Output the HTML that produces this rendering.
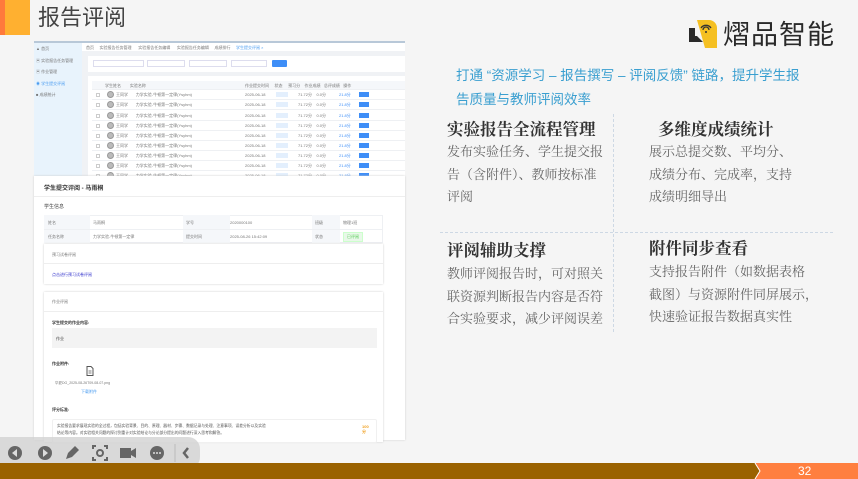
<!DOCTYPE html>
<html><head><meta charset="utf-8"><style>
*{margin:0;padding:0;box-sizing:border-box}
body{width:858px;height:479px;overflow:hidden;background:#f5f5f5;position:relative;font-family:"Liberation Sans","Noto Sans CJK SC",sans-serif}
.a{position:absolute;white-space:nowrap}
.t{font-size:4px;color:#777}
.sf{font-family:"Liberation Serif","Noto Serif CJK SC",serif}
.row{position:absolute;left:92px;width:313px;height:10px;border-bottom:1px solid #eef0f3}
.lbl{background:#f5f7fa}
h3{font-weight:bold}
</style></head><body>
<div class="a" style="left:0;top:0;width:5px;height:35px;background:#ff7a3c"></div>
<div class="a" style="left:5px;top:0;width:25px;height:35px;background:#ffb030"></div>
<div class="a" style="left:38px;top:4px;font-size:22px;color:#444;line-height:28px">报告评阅</div>

<div class="a" style="left:34px;top:41px;width:371px;height:135px;background:#f0f2f5;border-top:2px solid #b8c8d8"></div>
<div class="a" style="left:34px;top:43px;width:48px;height:135px;background:#e8f3fc"></div>
<div class="a t" style="left:36px;top:46px">▲ 首页</div>
<div class="a t" style="left:36px;top:58px">▣ 实验报告任务管理</div>
<div class="a t" style="left:36px;top:69px">▣ 作业管理</div>
<div class="a t" style="left:36px;top:81px;color:#4a9cf0">◉ 学生提交评阅</div>
<div class="a t" style="left:36px;top:92px">■ 成绩统计</div>
<div class="a" style="left:82px;top:43px;width:323px;height:8px;background:#fff"></div>
<div class="a t" style="left:86px;top:45px">首页 &nbsp;&nbsp;&nbsp; 实验报告任务管理 &nbsp;&nbsp;&nbsp;&nbsp; 实验报告任务编辑 &nbsp;&nbsp;&nbsp;&nbsp; 实验报告任务编辑 &nbsp;&nbsp;&nbsp; 成绩排行 &nbsp;&nbsp;&nbsp; <span style="color:#4a9cf0">学生提交评阅 ×</span></div>
<div class="a" style="left:88px;top:56px;width:317px;height:16px;background:#fff"></div>
<div class="a" style="left:93px;top:60px;width:51px;height:7px;border:1px solid #dde"></div>
<div class="a" style="left:147px;top:60px;width:38px;height:7px;border:1px solid #dde"></div>
<div class="a" style="left:189px;top:60px;width:38px;height:7px;border:1px solid #dde"></div>
<div class="a" style="left:231px;top:60px;width:36px;height:7px;border:1px solid #dde"></div>
<div class="a" style="left:272px;top:60px;width:15px;height:7px;background:#3e8ef7;border-radius:1px"></div>
<div class="a" style="left:88px;top:76px;width:317px;height:100px;background:#fff"></div>
<div class="row" style="top:81px;background:#f5f7fa;height:9px"></div>
<div class="a t" style="left:105px;top:83px">学生姓名 &nbsp;&nbsp;&nbsp;&nbsp;&nbsp;&nbsp; 实验名称</div>
<div class="a t" style="left:245px;top:83px">作业提交时间 &nbsp;&nbsp;&nbsp; 状态 &nbsp;&nbsp;&nbsp; 预习分 &nbsp;&nbsp; 作业成绩 &nbsp; 总评成绩 &nbsp; 操作</div>
<div id="rows"></div>
<script>
var ys=[90,100,111,121,131,141,151,161,171],h='';
ys.forEach(function(y){
h+='<div class="row" style="top:'+y+'px"></div>';
h+='<div class="a" style="left:96px;top:'+(y+3)+'px;width:4px;height:4px;border:1px solid #ccc"></div>';
h+='<div class="a" style="left:107px;top:'+(y+1)+'px;width:7px;height:7px;border-radius:50%;background:#bbb;border:1px solid #999"></div>';
h+='<div class="a t" style="left:116px;top:'+(y+2)+'px">王同学 &nbsp;&nbsp;&nbsp;&nbsp;&nbsp; 力学实验-牛顿第一定律(Ysyhm)</div>';
h+='<div class="a t" style="left:245px;top:'+(y+2)+'px">2025-06-18</div>';
h+='<div class="a" style="left:276px;top:'+(y+2)+'px;width:12px;height:5px;background:#e3effd"></div>';
h+='<div class="a t" style="left:298px;top:'+(y+2)+'px">71.72分 &nbsp;&nbsp; 0.0分</div>';
h+='<div class="a t" style="left:339px;top:'+(y+2)+'px;color:#3e8ef7">21.8分</div>';
h+='<div class="a" style="left:359px;top:'+(y+2)+'px;width:10px;height:5px;background:#3e8ef7"></div>';
});
document.getElementById('rows').innerHTML=h;
</script>

<div class="a" style="left:34px;top:176px;width:371px;height:264px;background:#fff;box-shadow:0 0 2px #ccc"></div>
<div class="a" style="left:44px;top:183px;font-size:6px;font-weight:bold;color:#333">学生提交评阅 - 马雨桐</div>
<div class="a" style="left:34px;top:196px;width:371px;height:1px;background:#eee"></div>
<div class="a" style="left:44px;top:203px;font-size:5px;color:#444">学生信息</div>
<div class="a" style="left:44px;top:215px;width:339px;height:28px;border:1px solid #eef0f3"></div>
<div class="a lbl" style="left:44px;top:215px;width:46px;height:28px"></div>
<div class="a lbl" style="left:183px;top:215px;width:47px;height:28px"></div>
<div class="a lbl" style="left:312px;top:215px;width:28px;height:28px"></div>
<div class="a" style="left:44px;top:229px;width:339px;height:1px;background:#eef0f3"></div>
<div class="a t" style="left:48px;top:220px">姓名</div><div class="a t" style="left:93px;top:220px">马雨桐</div>
<div class="a t" style="left:186px;top:220px">学号</div><div class="a t" style="left:230px;top:220px">2020000100</div>
<div class="a t" style="left:315px;top:220px">班级</div><div class="a t" style="left:343px;top:220px">物理1班</div>
<div class="a t" style="left:48px;top:234px">任务名称</div><div class="a t" style="left:93px;top:234px">力学实验-牛顿第一定律</div>
<div class="a t" style="left:186px;top:234px">提交时间</div><div class="a t" style="left:230px;top:234px">2025-08-26 15:42:09</div>
<div class="a t" style="left:315px;top:234px">状态</div>
<div class="a t" style="left:343px;top:232px;background:#e8f8e8;color:#5c5;padding:1px 3px;border:1px solid #cfc">已评阅</div>
<div class="a" style="left:44px;top:244px;width:339px;height:40px;background:#fff;box-shadow:0 0 2px #ccc"></div>
<div class="a t" style="left:52px;top:252px">预习试卷评阅</div>
<div class="a" style="left:44px;top:263px;width:339px;height:1px;background:#eee"></div>
<div class="a t" style="left:52px;top:272px;color:#33c">点击进行预习试卷评阅</div>
<div class="a" style="left:44px;top:292px;width:339px;height:150px;background:#fff;box-shadow:0 0 2px #ccc"></div>
<div class="a t" style="left:52px;top:299px">作业评阅</div>
<div class="a" style="left:44px;top:311px;width:339px;height:1px;background:#eee"></div>
<div class="a t" style="left:52px;top:320px;color:#333;font-weight:bold">学生提交的作业内容:</div>
<div class="a" style="left:52px;top:328px;width:325px;height:20px;background:#f3f3f3"></div>
<div class="a t" style="left:56px;top:336px;color:#444">作业</div>
<div class="a t" style="left:52px;top:361px;color:#333;font-weight:bold">作业附件:</div>
<svg class="a" style="left:86px;top:366px" width="8" height="10" viewBox="0 0 8 10"><path d="M1 .5h4l2 2v7H1z" fill="none" stroke="#555"/><path d="M2.5 5h3M2.5 7h3" stroke="#555" stroke-width=".8"/></svg>
<div class="a t" style="left:55px;top:381px;font-size:3.5px">华夏DG_2025-08-26T09-08-07.png</div>
<div class="a t" style="left:81px;top:389px;color:#4a9cf0">下载附件</div>
<div class="a t" style="left:52px;top:407px;color:#333;font-weight:bold">评分标准:</div>
<div class="a" style="left:52px;top:419px;width:325px;height:24px;border:1px solid #f0f0f0;border-radius:2px"></div>
<div class="a t" style="left:57px;top:424px;color:#555;font-size:3.8px">实验报告要求展现实验的全过程，包括实验背景、目的、原理、器材、步骤、数据记录与处理、注意事项、误差分析以及实验</div>
<div class="a t" style="left:57px;top:431px;color:#555;font-size:3.8px">结论等内容。对实验相关问题的探讨到重计对实验结论与分论部分提出的问题进行深入思考和解答。</div>
<div class="a t" style="left:362px;top:424px;color:#f0a020;font-weight:bold">100<br>分</div>

<div class="a" style="left:0;top:437px;width:200px;height:32px;background:rgba(210,210,210,.8);border-radius:0 12px 12px 0"></div>
<svg class="a" style="left:0;top:437px" width="200" height="32" viewBox="0 0 200 32">
<circle cx="15" cy="16" r="7" fill="#666"/><path d="M17 12l-5 4 5 4z" fill="#ddd"/>
<circle cx="45" cy="16" r="7" fill="#666"/><path d="M43 12l5 4-5 4z" fill="#ddd"/>
<path d="M66 22l2-6 7-7 4 4-7 7z" fill="#666"/>
<path d="M93 12v-3h3M104 9h3v3M107 20v3h-3M96 23h-3v-3" stroke="#666" stroke-width="2" fill="none"/><circle cx="100" cy="16" r="3" fill="none" stroke="#666" stroke-width="2"/>
<rect x="120" y="11" width="11" height="10" fill="#666"/><path d="M131 14l5-3v10l-5-3z" fill="#666"/>
<circle cx="157" cy="16" r="7" fill="#666"/><circle cx="154" cy="16" r="1" fill="#ddd"/><circle cx="157" cy="16" r="1" fill="#ddd"/><circle cx="160" cy="16" r="1" fill="#ddd"/>
<path d="M175 7v18" stroke="#bbb"/><path d="M188 11l-4 5 4 5" stroke="#666" stroke-width="2.5" fill="none"/>
</svg>

<svg class="a" style="left:687px;top:18px" width="32" height="32" viewBox="0 0 32 32">
<path d="M10 2h12a8 8 0 0 1 8 8v20h-12z" fill="#f5c022"/>
<path d="M2 10v14h14l-6-6H8v-8z" fill="#2a2a2a"/>
<path d="M14 10a6 6 0 0 1 10 0M16 12a3 3 0 0 1 6 0" stroke="#333" stroke-width="1.3" fill="none"/><circle cx="19" cy="14" r="1" fill="#333"/>
</svg>
<div class="a" style="left:723px;top:16px;font-size:27px;color:#2a2a2a;line-height:34px;letter-spacing:1px;font-family:'Noto Sans CJK SC',sans-serif">熠品智能</div>

<div class="a" style="left:456px;top:64px;font-size:13.5px;color:#3a9fd0;line-height:24px">打通 “资源学习 – 报告撰写 – 评阅反馈” 链路，提升学生报<br>告质量与教师评阅效率</div>
<div class="a" style="left:613px;top:114px;height:218px;border-left:1px dashed #cdd8e4"></div>
<div class="a" style="left:440px;top:232px;width:393px;border-top:1px dashed #cdd8e4"></div>
<div class="a sf" style="left:447px;top:116px;font-size:16.5px;color:#333;font-weight:bold">实验报告全流程管理</div>
<div class="a sf" style="left:447px;top:141px;font-size:13px;color:#666;line-height:22.5px">发布实验任务、学生提交报<br>告（含附件）、教师按标准<br>评阅</div>
<div class="a sf" style="left:658px;top:116px;font-size:16.5px;color:#333;font-weight:bold">多维度成绩统计</div>
<div class="a sf" style="left:649px;top:141px;font-size:13px;color:#666;line-height:22.5px">展示总提交数、平均分、<br>成绩分布、完成率，支持<br>成绩明细导出</div>
<div class="a sf" style="left:447px;top:237px;font-size:16.5px;color:#333;font-weight:bold">评阅辅助支撑</div>
<div class="a sf" style="left:447px;top:263px;font-size:13px;color:#666;line-height:22.5px">教师评阅报告时，可对照关<br>联资源判断报告内容是否符<br>合实验要求，减少评阅误差</div>
<div class="a sf" style="left:649px;top:235px;font-size:16.5px;color:#333;font-weight:bold">附件同步查看</div>
<div class="a sf" style="left:649px;top:261px;font-size:13px;color:#666;line-height:22.5px">支持报告附件（如数据表格<br>截图）与资源附件同屏展示，<br>快速验证报告数据真实性</div>

<div class="a" style="left:0;top:463px;width:858px;height:16px;background:#9a6200"></div>
<div class="a" style="left:755px;top:463px;width:103px;height:16px;background:#ff7f3f"></div>
<svg class="a" style="left:748px;top:463px" width="14" height="16" viewBox="0 0 14 16"><path d="M0 0h7l5 8-5 8H0l5-8z" fill="#9a6200"/><path d="M7 0l5 8-5 8" stroke="#fff" stroke-width="1" fill="none"/></svg>
<div class="a" style="left:798px;top:464px;font-size:12px;color:#fff">32</div>
</body></html>
